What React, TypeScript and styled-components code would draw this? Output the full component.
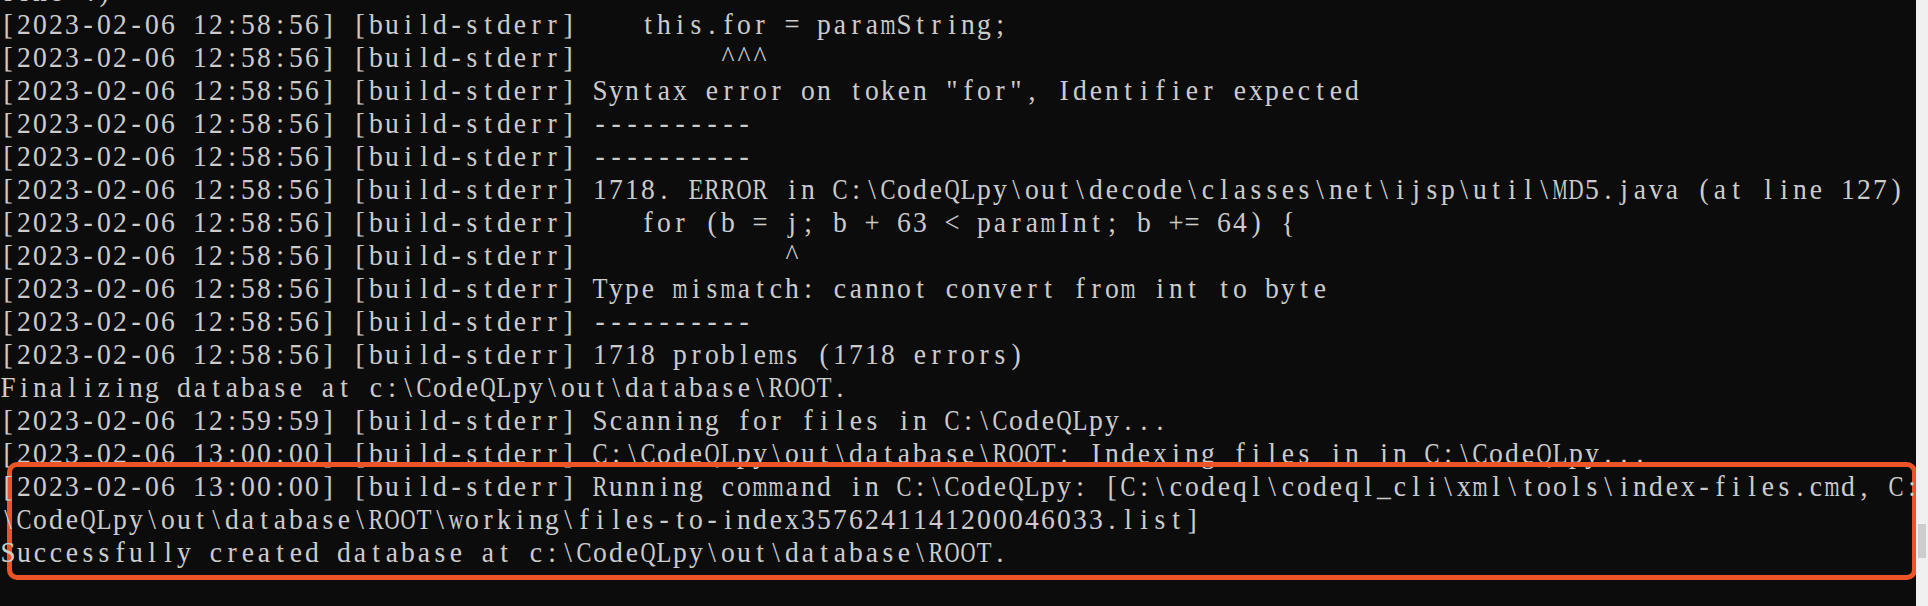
import React from 'react';
import styled, { createGlobalStyle } from 'styled-components';

const FONT_PX = 30;
const CELL_PX = 16;
const MAX_INK = 15;

// Advance widths of Times / Liberation Serif, in 1/1000 em
const TIMES: Record<string, number> = {
  ' ': 250, '!': 333, '"': 408, '#': 500, '$': 500, '%': 833, '&': 778, "'": 180,
  '(': 333, ')': 333, '*': 500, '+': 564, ',': 250, '-': 333, '.': 250, '/': 278,
  '0': 500, '1': 500, '2': 500, '3': 500, '4': 500, '5': 500, '6': 500, '7': 500, '8': 500, '9': 500,
  ':': 278, ';': 278, '<': 564, '=': 564, '>': 564, '?': 444, '@': 921,
  A: 722, B: 667, C: 667, D: 722, E: 611, F: 556, G: 722, H: 722, I: 333, J: 389, K: 722, L: 611,
  M: 889, N: 722, O: 722, P: 556, Q: 722, R: 667, S: 556, T: 611, U: 722, V: 722, W: 944, X: 722,
  Y: 722, Z: 611, '[': 333, '\\': 278, ']': 333, '^': 469, _: 500, '`': 333,
  a: 444, b: 500, c: 444, d: 500, e: 444, f: 333, g: 500, h: 500, i: 278, j: 278, k: 500, l: 278,
  m: 778, n: 500, o: 500, p: 500, q: 500, r: 333, s: 389, t: 278, u: 500, v: 500, w: 722, x: 500,
  y: 500, z: 444, '{': 480, '|': 200, '}': 480, '~': 541,
};

const squeeze = (ch: string) => {
  const w = ((TIMES[ch] ?? 500) * FONT_PX) / 1000;
  return Math.min(0.92, MAX_INK / w);
};

const GlobalStyle = createGlobalStyle`
  html, body {
    margin: 0;
    padding: 0;
    background: #0c0c0c;
    overflow: hidden;
  }
`;

const Window = styled.div`
  display: flex;
  width: 1928px;
  height: 606px;
  background: #0c0c0c;
  overflow: hidden;
`;

const Screen = styled.div`
  flex: 1;
  min-width: 0;
  overflow: hidden;
  font-family: "Liberation Serif", "Times New Roman", serif;
  font-size: ${FONT_PX}px;
  color: #cccccc;
`;

const Buffer = styled.div`
  display: flex;
  flex-direction: column;
  margin-top: -26px;
`;

const Row = styled.div`
  display: flex;
  flex: none;
  height: 33px;
  line-height: 33px;
  white-space: pre;
`;

const Cell = styled.span`
  display: flex;
  justify-content: center;
  flex: none;
  width: ${CELL_PX}px;
`;

const Highlight = styled.div`
  position: relative;
  display: flex;
  flex-direction: column;

  &::before {
    content: '';
    position: absolute;
    top: -7px;
    bottom: -12px;
    left: 7px;
    right: -1px;
    border: 5px solid #ec5428;
    border-radius: 10px;
    pointer-events: none;
  }
`;

const Scrollbar = styled.div`
  flex: none;
  width: 12px;
  background: #f0f0f0;
  display: flex;
  flex-direction: column;
  justify-content: flex-end;
`;

const Thumb = styled.div`
  height: 34px;
  margin: 0 2px 48px 2px;
  background: #cdcdcd;
`;

const Line: React.FC<{ text: string }> = ({ text }) => (
  <Row>
    {Array.from(text).map((ch, i) => (
      <Cell key={i} style={{ transform: `scaleX(${squeeze(ch).toFixed(3)})` }}>
        {ch}
      </Cell>
    ))}
  </Row>
);

const P1 = '[2023-02-06 12:58:56] [build-stderr]';
const pad = (s: string, col: number) => s.padEnd(col, ' ');

const before: string[] = [
  'line 4)',
  pad(P1, 40) + 'this.for = paramString;',
  pad(P1, 45) + '^^^',
  P1 + ' Syntax error on token "for", Identifier expected',
  P1 + ' ----------',
  P1 + ' ----------',
  P1 + ' 1718. ERROR in C:\\CodeQLpy\\out\\decode\\classes\\net\\ijsp\\util\\MD5.java (at line 127)',
  pad(P1, 40) + 'for (b = j; b + 63 < paramInt; b += 64) {',
  pad(P1, 49) + '^',
  P1 + ' Type mismatch: cannot convert from int to byte',
  P1 + ' ----------',
  P1 + ' 1718 problems (1718 errors)',
  'Finalizing database at c:\\CodeQLpy\\out\\database\\ROOT.',
  '[2023-02-06 12:59:59] [build-stderr] Scanning for files in C:\\CodeQLpy...',
  '[2023-02-06 13:00:00] [build-stderr] C:\\CodeQLpy\\out\\database\\ROOT: Indexing files in in C:\\CodeQLpy...',
];

const highlighted: string[] = [
  '[2023-02-06 13:00:00] [build-stderr] Running command in C:\\CodeQLpy: [C:\\codeql\\codeql_cli\\xml\\tools\\index-files.cmd, C:',
  '\\CodeQLpy\\out\\database\\ROOT\\working\\files-to-index3576241141200046033.list]',
  'Successfully created database at c:\\CodeQLpy\\out\\database\\ROOT.',
];

const after: string[] = ['', 'C:\\CodeQLpy>'];

export default function App() {
  return (
    <>
      <GlobalStyle />
      <Window>
        <Screen>
          <Buffer>
            {before.map((t, i) => (
              <Line key={`b${i}`} text={t} />
            ))}
            <Highlight>
              {highlighted.map((t, i) => (
                <Line key={`h${i}`} text={t} />
              ))}
            </Highlight>
            {after.map((t, i) => (
              <Line key={`a${i}`} text={t} />
            ))}
          </Buffer>
        </Screen>
        <Scrollbar>
          <Thumb />
        </Scrollbar>
      </Window>
    </>
  );
}
